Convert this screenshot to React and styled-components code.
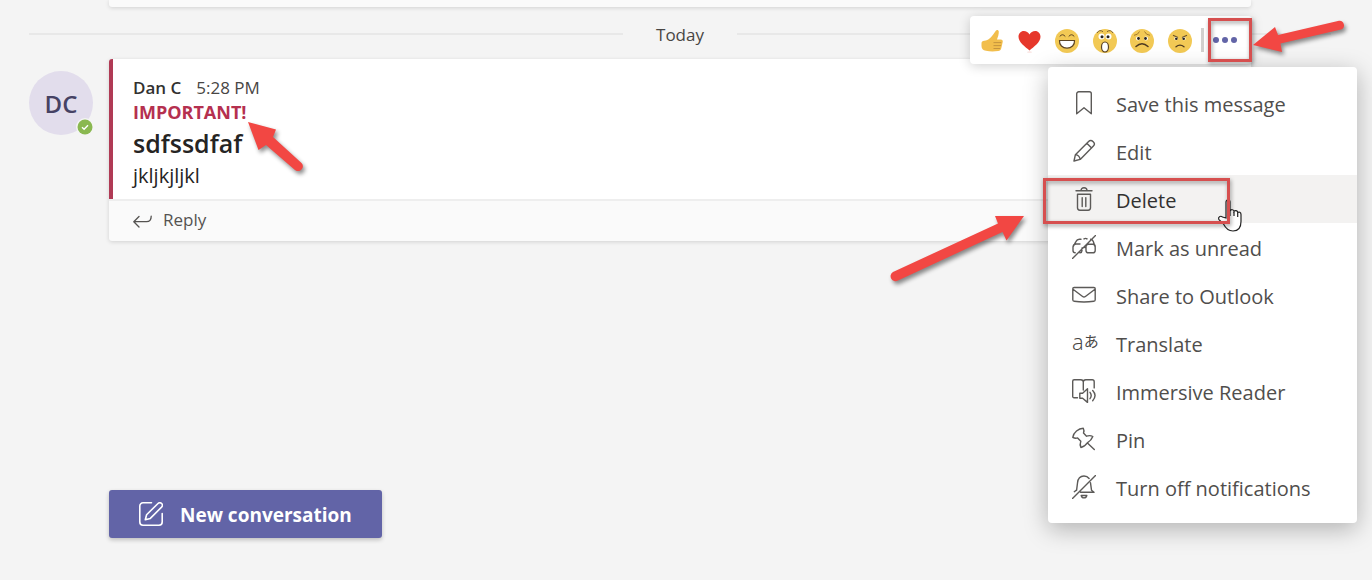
import React from "react";
import styled, { createGlobalStyle } from "styled-components";

const Global = createGlobalStyle`
  *, *::before, *::after { box-sizing: border-box; }
  body {
    margin: 0;
    background: #f4f4f4;
    color: #252423;
    font-family: "Open Sans", "Noto Sans", sans-serif;
  }
  button { font: inherit; color: inherit; border: 0; background: none; padding: 0; cursor: pointer; }
`;

const Page = styled.div`
  position: relative;
  display: flex;
  flex-direction: column;
  min-height: 100vh;
  padding: 0 41px 42px 29px;
  overflow: hidden;
`;

const PreviousCard = styled.div`
  height: 7px;
  margin: 0 80px;
  background: #fafafa;
  border-radius: 0 0 3px 3px;
  box-shadow: 0 1px 4px rgba(0, 0, 0, 0.14);
`;

const DayDivider = styled.div`
  display: flex;
  align-items: center;
  gap: 33px;
  height: 52px;
  padding-top: 2px;
  font-size: 17px;
  color: #484644;
  &::before, &::after { content: ""; flex: 1; height: 2px; background: #e8e8e8; }
`;

const MessageRow = styled.article`
  display: flex;
  align-items: flex-start;
  gap: 16px;
  padding-right: 80px;
`;

const Avatar = styled.div`
  position: relative;
  display: grid;
  place-items: center;
  width: 64px;
  height: 64px;
  margin-top: 12px;
  border-radius: 50%;
  background: #e2ddec;
  color: #464264;
  font-size: 24px;
  font-weight: 600;
`;

const Presence = styled.svg`
  position: absolute;
  right: -1px;
  bottom: -1px;
`;

const Card = styled.div`
  flex: 1;
  background: #fafafa;
  border-radius: 3px;
  box-shadow: 0 1px 4px rgba(0, 0, 0, 0.14);
`;

const CardBody = styled.div`
  padding: 16px 20px 8px;
  background: #fff;
  border-left: 4px solid #b03a55;
  border-radius: 3px 3px 0 0;
`;

const Meta = styled.div`
  display: flex;
  gap: 15px;
  font-size: 17px;
  line-height: 25px;
  color: #484644;
`;

const Author = styled.span`
  font-weight: 600;
  color: #323130;
`;

const Important = styled.div`
  font-size: 18px;
  line-height: 25px;
  font-weight: 700;
  color: #b5304f;
`;

const Title = styled.h2`
  margin: 0;
  font-size: 25px;
  line-height: 36px;
  font-weight: 600;
`;

const Text = styled.p`
  margin: 0;
  font-size: 20px;
  line-height: 30px;
`;

const ReplyButton = styled.button`
  display: flex;
  align-items: center;
  gap: 11px;
  width: 100%;
  height: 42px;
  padding: 0 24px;
  border-top: 2px solid #eeeeee;
  font-size: 17px;
  color: #555351;
`;

const ReplyLabel = styled.span`
  padding-bottom: 4px;
`;

const NewConversation = styled.button`
  display: flex;
  align-items: center;
  align-self: flex-start;
  gap: 17px;
  height: 48px;
  margin: auto 0 0 80px;
  padding: 0 30px;
  border-radius: 3px;
  background: #6264a7;
  color: #fff;
  font-size: 19px;
  font-weight: 700;
  box-shadow: 0 2px 4px rgba(0, 0, 0, 0.22);
`;

const Label = styled.span`
  padding-top: 2px;
`;

const ReactionBar = styled.div`
  position: absolute;
  top: 16px;
  right: 120px;
  display: flex;
  align-items: center;
  width: 282px;
  height: 48px;
  padding-left: 3px;
  background: #fff;
  border-radius: 4px;
  box-shadow: 0 2px 12px rgba(0, 0, 0, 0.18);
`;

const Reactions = styled.div`
  display: grid;
  flex: 1;
  grid-template-columns: repeat(6, 1fr);
`;

const ReactionButton = styled.button`
  display: grid;
  place-items: center;
  height: 48px;
  padding-top: 2px;
`;

const Separator = styled.span`
  width: 3px;
  height: 24px;
  margin-left: 2px;
  background: #d2d0ce;
`;

const MoreButton = styled.button`
  display: grid;
  place-items: center;
  width: 48px;
  height: 48px;
  padding-right: 6px;
`;

const Menu = styled.div`
  position: absolute;
  top: 67px;
  right: 15px;
  width: 309px;
  padding: 12px 0;
  background: #fff;
  border-radius: 4px;
  box-shadow: 0 6px 24px rgba(0, 0, 0, 0.28);
`;

const MenuItem = styled.button`
  display: flex;
  align-items: center;
  gap: 20px;
  width: 100%;
  height: 48px;
  padding: 0 24px;
  background: ${(p) => (p.$active ? "#f3f2f1" : "transparent")};
  color: ${(p) => (p.$active ? "#323130" : "#504e4c")};
  font-size: 20px;
  text-align: left;
  white-space: nowrap;
  svg { color: #5c5a58; }
`;

const TranslateGlyph = styled.span`
  display: flex;
  align-items: center;
  width: 24px;
  height: 24px;
  padding-bottom: 4px;
  font-size: 22px;
  font-weight: 300;
  line-height: 24px;
  color: #484644;
`;

const Kana = styled.span`
  font-family: "Noto Sans CJK JP", sans-serif;
  font-size: 15px;
  font-weight: 400;
`;

const Highlight = styled.div`
  position: absolute;
  top: ${(p) => p.$top}px;
  right: ${(p) => p.$right}px;
  width: ${(p) => p.$width}px;
  height: ${(p) => p.$height}px;
  border: 3px solid #d64f4f;
  filter: drop-shadow(1px 2px 2px rgba(0, 0, 0, 0.4));
  pointer-events: none;
`;

const Mark = styled.svg`
  position: absolute;
  top: ${(p) => p.$top}px;
  ${(p) => (p.$left !== undefined ? `left: ${p.$left}px;` : `right: ${p.$right}px;`)}
  overflow: visible;
  pointer-events: none;
  ${(p) => p.$shadow && "filter: drop-shadow(2px 3px 2px rgba(0, 0, 0, 0.45));"}
`;

const Icon = ({ children, size = 24, width = 1.4 }) => (
  <svg width={size} height={size} viewBox="0 0 24 24" fill="none" stroke="currentColor"
    strokeWidth={width} strokeLinejoin="round" strokeLinecap="round" aria-hidden="true">
    {children}
  </svg>
);

const icons = {
  save: <Icon><path d="M4.700 22.800V2.800a2 2 0 0 1 2-2h10.600a2 2 0 0 1 2 2v20L12 16.800z" /></Icon>,
  edit: <Icon><path d="M2 22l1.400-6.300L16.600 2.400a3 3 0 0 1 4.300 0l.5.5a3 3 0 0 1 0 4.200L8.200 20.400zM14.800 4.300l4.800 4.800M3.600 15.600c2.400.4 4.100 2.100 4.500 4.600" /></Icon>,
  trash: <Icon><path d="M4 3.800h16M9 3.600C9 1.600 10.200.8 12 .8s3 .8 3 2.800M5.500 7.200h13v13.600a2.400 2.400 0 0 1-2.400 2.400H7.900a2.400 2.400 0 0 1-2.400-2.400zM10.200 10.600v9M13.800 10.600v9" /></Icon>,
  unread: <Icon><path d="M.5 23.500L23.500.5M9 4.300H7.300C5.600 4.300 4.600 5.200 3.900 6.600L1 12v3.600c0 1.300.8 2.200 2.200 2.200M1 11.800c.3-1.900 1.300-2.800 3-2.800h4M12 3.900c1.200-.8 2-.8 3 0M18.600 4.300c1.400.2 2.200 1 2.700 2.300L23.200 12M16.400 9.200h4.400c1.500 0 2.400.9 2.400 2.400v3.800c0 1.500-.9 2.400-2.400 2.400h-4.400c-1.500 0-2.400-.9-2.400-2.400v-3.800c0-1.500.9-2.400 2.400-2.400zM10 13v2.400c0 1.200-.7 2.200-2 2.400M10.500 12.800c1-.6 2.200-.6 3.500 0" /></Icon>,
  mail: <Icon><path d="M.8 5.800c0-.8.5-1.300 1.300-1.300h19.800c.8 0 1.300.5 1.300 1.300v10.900c0 .9-.5 1.500-1.400 1.600-6.500.9-13.100.9-19.600 0-.9-.1-1.400-.7-1.400-1.600zM1 6.200l9.600 7.300c.9.7 1.900.7 2.800 0L23 6.200" /></Icon>,
  reader: <Icon><path d="M5.500 18.700H2a1.300 1.300 0 0 1-1.300-1.300V2.300C.7 1.300 1.200.8 2.100.8h6.700c1.600 0 2.500.8 2.500 2.300v8M11.300 3.100c0-1.500.9-2.300 2.500-2.300h6.400c1.300 0 2 .6 2 1.900v6.200M7.800 14.300h2.800l4.900-4.500v13.600l-4.900-4.200H7.800zM18 13.300c1.500 2 1.500 4.400 0 6.400M20.700 11.500c3 3.200 3 6.900 0 10.200" /></Icon>,
  pin: <Icon><path d="M11.300 1.300C6.500 1.400 1.500 5.600.8 10.300c1.500.9 3.200 1.100 4.800.6l3.200 3.400c-.8 2.100-.9 4.200.1 6.200 2.600-.6 4.900-2.500 6.400-4.700 2.500-1.500 4.600-3.700 5.500-6.300-2-1.100-4.200-1-6.300-.3l-3-3.200c.6-1.600.6-3.200-.2-4.700zM15.400 15.900l6.900 6.700" /></Icon>,
  mute: <Icon><path d="M.5 23.500L23.500.5M4.600 15.200L5.500 8C5.900 3.900 8.300 1 12 1c2.200 0 3.900.9 5.100 2.500M18.500 7.800l1 7.400 2.500 2.100H8.500M2.300 16.700l2.100-1.600M9.200 20.500c.8 3.200 4.800 3.200 5.600 0z" /></Icon>,
};

const menuItems = [
  ["Save this message", icons.save],
  ["Edit", icons.edit],
  ["Delete", icons.trash],
  ["Mark as unread", icons.unread],
  ["Share to Outlook", icons.mail],
  ["Translate", <TranslateGlyph key="t" aria-hidden="true">a<Kana>あ</Kana></TranslateGlyph>],
  ["Immersive Reader", icons.reader],
  ["Pin", icons.pin],
  ["Turn off notifications", icons.mute],
];

const Emoji = ({ children }) => (
  <svg width="24" height="24" viewBox="0 0 24 24" aria-hidden="true">{children}</svg>
);
const Face = () => <circle cx="12" cy="12" r="12" fill="#f2c955" />;

const reactions = [
  ["Like", <>
    <path d="M1.500 14.500c0-1.700 1-2.600 2.800-2.700 4.400-.6 7.200-3.600 9.600-7.300L16 1.600c.9-1.200 2.700-.6 2.800 1 .1 2.900-.9 5.500-1.800 8h3.700c1.500 0 2.400 1 2 2.500l-1.500 6.500c-.4 1.600-1.400 2.400-3 2.500-4 .4-8.500.5-12.200-.3C2.900 21.200 1.500 19.700 1.500 17z" fill="#f2be4c" />
    <path d="M13.500 13.600h7.800M13.500 16.600h7.500M13.500 19.500h6.500" stroke="#c08f3d" strokeWidth=".9" fill="none" />
  </>],
  ["Heart", <>
    <path d="M12.500 21.500C8.500 18 1.500 13.500 1.500 7.800 1.500 4.500 3.800 2 6.800 2c2.400 0 4.600 1.300 5.700 3.500C13.600 3.300 15.800 2 18.200 2c3 0 5.300 2.500 5.300 5.800 0 5.700-7 10.200-11 13.700z" fill="#e6372b" />
    <ellipse cx="12.500" cy="23" rx="2.500" ry=".6" fill="#f6d3cf" />
  </>],
  ["Laugh", <>
    <Face />
    <path d="M4.700 7.500Q7.500 4 10.300 7.500M13.700 7.500Q16.500 4 19.300 7.500" stroke="#5c4424" strokeWidth="1" fill="none" />
    <path d="M4.500 11.500h15c.4 4.500-3 7.700-7.500 7.700s-7.900-3.200-7.500-7.700z" fill="#fff" stroke="#5c4424" strokeWidth="1.200" />
  </>],
  ["Surprised", <>
    <Face />
    <path d="M4 4Q6.500 0 10 2.700M14 2.700Q17.500 0 20 4" stroke="#7d6230" strokeWidth="1" fill="none" />
    <circle cx="8.500" cy="7.500" r="3" fill="#fff" /><circle cx="15.500" cy="7.500" r="3" fill="#fff" />
    <circle cx="9" cy="7.700" r="1.500" fill="#29231c" /><circle cx="15" cy="7.700" r="1.500" fill="#29231c" />
    <ellipse cx="12" cy="18" rx="3.500" ry="5" fill="#fff" stroke="#5c4424" strokeWidth="1.200" />
  </>],
  ["Sad", <>
    <Face />
    <path d="M4 6.300Q8 6 9.500 2.500M20 6.300Q16 6 14.500 2.500" stroke="#a57b2d" strokeWidth="1" fill="none" />
    <circle cx="8" cy="9.500" r="2" fill="#fff" /><circle cx="16" cy="9.500" r="2" fill="#fff" />
    <circle cx="8.500" cy="9.500" r="1.400" fill="#29231c" /><circle cx="15.500" cy="9.500" r="1.400" fill="#29231c" />
    <path d="M6 17.500Q12 12 18 17.500" stroke="#4d3920" strokeWidth="1.500" fill="none" strokeLinecap="round" />
  </>],
  ["Angry", <>
    <Face />
    <path d="M5 6.200l5 2.300M19 6.200l-5 2.300" stroke="#6d5228" strokeWidth="1.100" fill="none" />
    <circle cx="8" cy="9.700" r="1.600" fill="#fff" /><circle cx="16" cy="9.700" r="1.600" fill="#fff" />
    <circle cx="8.300" cy="9.700" r="1.300" fill="#29231c" /><circle cx="15.700" cy="9.700" r="1.300" fill="#29231c" />
    <path d="M8 17.800Q12 14.500 16 17.800" stroke="#4d3920" strokeWidth="1.300" fill="none" strokeLinecap="round" />
  </>],
];

export default function App() {
  return (
    <Page>
      <Global />
      <PreviousCard />
      <DayDivider>Today</DayDivider>
      <MessageRow>
        <Avatar>
          DC
          <Presence width="18" height="18" viewBox="0 0 18 18" aria-label="Available">
            <circle cx="9" cy="9" r="9" fill="#f4f4f4" />
            <circle cx="9" cy="9" r="7.500" fill="#8ab850" />
            <path d="M6 9.200l2.100 2L12 7.200" stroke="#fff" strokeWidth="1.400" fill="none" />
          </Presence>
        </Avatar>
        <Card>
          <CardBody>
            <Meta><Author>Dan C</Author><time>5:28 PM</time></Meta>
            <Important>IMPORTANT!</Important>
            <Title>sdfssdfaf</Title>
            <Text>jkljkjljkl</Text>
          </CardBody>
          <ReplyButton>
            <svg width="19" height="14" viewBox="0 0 19 14" fill="none" stroke="currentColor" strokeWidth="1.300" strokeLinecap="round" strokeLinejoin="round" aria-hidden="true">
              <path d="M6 2.500L.8 7.700 6 13M1 7.700h12.500c3.200 0 4.700-2.200 4.700-5.500" />
            </svg>
            <ReplyLabel>Reply</ReplyLabel>
          </ReplyButton>
        </Card>
      </MessageRow>
      <NewConversation>
        <Icon size={24} width={1.6}>
          <path d="M12.500.8H4A3.200 3.200 0 0 0 .8 4v16A3.200 3.200 0 0 0 4 23.200h16a3.200 3.200 0 0 0 3.200-3.200v-8.500M6.300 17.700l1.300-5L19 1.500a2.500 2.500 0 0 1 3.600 3.600L11.300 16.400z" />
        </Icon>
        <Label>New conversation</Label>
      </NewConversation>

      <ReactionBar>
        <Reactions>
          {reactions.map(([name, art]) => (
            <ReactionButton key={name} aria-label={name}><Emoji>{art}</Emoji></ReactionButton>
          ))}
        </Reactions>
        <Separator />
        <MoreButton aria-label="More options">
          <svg width="26" height="8" viewBox="0 0 26 8" fill="#6264a7" aria-hidden="true">
            <circle cx="4" cy="4" r="3" /><circle cx="13" cy="4" r="3" /><circle cx="22" cy="4" r="3" />
          </svg>
        </MoreButton>
      </ReactionBar>

      <Menu>
        {menuItems.map(([label, icon]) => (
          <MenuItem key={label} $active={label === "Delete"}>{icon}<Label>{label}</Label></MenuItem>
        ))}
      </Menu>

      <Highlight $top={18} $right={120} $width={44} $height={44} />
      <Mark $top={198} $right={130} width="24" height="34" viewBox="0 0 24 34" aria-hidden="true">
        <path d="M8 20V4c0-3 4-3 4 0v9c1-2 4-1.500 4 .5 1-1.500 3.500-1 3.700 1 1.300-1 3.300-.3 3.300 2v7c0 6-3 9.500-8 9.500-5 0-7.500-3-9.500-7L.8 21.300C-.3 19 2.500 17.300 4.500 19z" fill="#fff" stroke="#222" strokeWidth="1.200" />
        <path d="M12 13v5M16 14v4M19.700 15v4" stroke="#222" strokeWidth="1.200" />
      </Mark>
      <Highlight $top={178} $right={142} $width={187} $height={46} />
      <Mark $shadow $top={20} $right={26} width="93" height="33" viewBox="0 0 93 33" aria-hidden="true">
        <path d="M0 25L22 7l3 8L86 .8a4.500 4.500 0 0 1 2 8.700L27.500 23.500l1.500 8.500z" fill="#f24743" />
      </Mark>
      <Mark $shadow $top={122} $left={248} width="55" height="50" viewBox="0 0 55 50" aria-hidden="true">
        <path d="M0 0l28 7.500-3 7.500L53.500 41a4.800 4.800 0 0 1-6.500 7L18 23l-7.500 5z" fill="#f24743" />
      </Mark>
      <Mark $shadow $top={216} $right={348} width="133" height="65" viewBox="0 0 133 65" aria-hidden="true">
        <path d="M133 0l-17.500 24.500-4-8.500L7 64.500a4.800 4.800 0 0 1-5-8.500L107 7.500 104 0z" fill="#f24743" />
      </Mark>
    </Page>
  );
}
